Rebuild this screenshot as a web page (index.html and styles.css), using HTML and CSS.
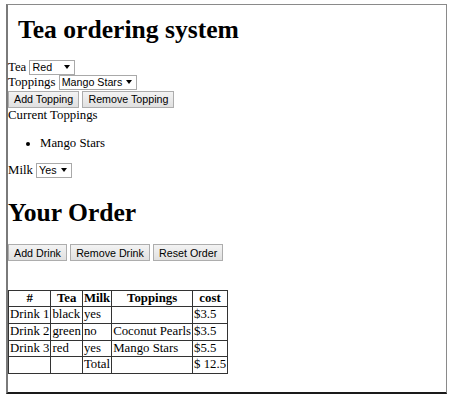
FILE: index.html
```html
<!DOCTYPE html>
<html>
<head>
<meta charset="utf-8">
<title>Tea ordering system</title>
<link rel="stylesheet" href="styles.css">
</head>
<body>
<div class="frame">
  <h1 class="title">Tea ordering system</h1>
  <div class="row">Tea <span class="sel sel-tea"><select><option>Red</option><option>Black</option><option>Green</option></select></span></div>
  <div class="row">Toppings <span class="sel sel-top"><select><option>Mango Stars</option><option>Coconut Pearls</option></select></span></div>
  <div class="row"><button class="btn">Add Topping</button> <button class="btn">Remove Topping</button></div>
  <div class="row">Current Toppings</div>
  <ul class="toppings"><li>Mango Stars</li></ul>
  <div class="row">Milk <span class="sel sel-milk"><select><option>Yes</option><option>No</option></select></span></div>
  <h1 class="order-title">Your Order</h1>
  <div class="actions"><button class="btn">Add Drink</button> <button class="btn">Remove Drink</button> <button class="btn">Reset Order</button></div>
  <table class="order">
    <thead>
      <tr><th>#</th><th>Tea</th><th>Milk</th><th>Toppings</th><th>cost</th></tr>
    </thead>
    <tbody>
      <tr><td>Drink 1</td><td>black</td><td>yes</td><td></td><td>$3.5</td></tr>
      <tr><td>Drink 2</td><td>green</td><td>no</td><td>Coconut Pearls</td><td>$3.5</td></tr>
      <tr><td>Drink 3</td><td>red</td><td>yes</td><td>Mango Stars</td><td>$5.5</td></tr>
      <tr><td></td><td></td><td>Total</td><td></td><td>$ 12.5</td></tr>
    </tbody>
  </table>
</div>
</body>
</html>
```
FILE: styles.css
```css
html, body {
  background: #fff;
}
body {
  margin: 4px 6px 6px 6px;
  font-family: "Liberation Serif", "Times New Roman", serif;
  font-size: 12.8px;
  color: #000;
}
.frame {
  box-sizing: border-box;
  height: 390px;
  border-left: 2px solid #7a7a7a;
  border-top: 1px solid #8a8a8a;
  border-right: 1px solid #8a8a8a;
  border-bottom: 2px solid #1a1a1a;
}
.title {
  font-size: 25.6px;
  font-weight: bold;
  margin: 10px 0 15px 10px;
}
.order-title {
  font-size: 25.6px;
  font-weight: bold;
  margin: 19px 0 16px 0;
}
.row {
  line-height: 15.3px;
}
.sel {
  position: relative;
  display: inline-block;
  vertical-align: baseline;
}
.sel select {
  -webkit-appearance: none;
  appearance: none;
  box-sizing: border-box;
  height: 15px;
  margin: 0;
  padding: 0 0 0 2px;
  border: 1px solid #a9a9a9;
  border-radius: 0;
  background: #fff;
  font-family: "Liberation Sans", Arial, sans-serif;
  font-size: 10.7px;
  line-height: 13px;
  color: #000;
}
.sel::after {
  content: "";
  position: absolute;
  right: 5px;
  top: 5px;
  width: 0;
  height: 0;
  border-left: 3px solid transparent;
  border-right: 3px solid transparent;
  border-top: 4px solid #000;
  pointer-events: none;
}
.sel-tea select { width: 46px; }
.sel-top select { width: 78px; }
.sel-milk select { width: 36px; }
.btn {
  box-sizing: border-box;
  height: 17px;
  margin: 0;
  padding: 0 5px;
  border: 1px solid #adadad;
  border-radius: 0;
  background: linear-gradient(#f3f3f3, #e0e0e0);
  font-family: "Liberation Sans", Arial, sans-serif;
  font-size: 10.7px;
  color: #000;
  vertical-align: baseline;
}
.toppings {
  margin: 12.8px 0;
  padding-left: 32px;
  line-height: 15px;
}
.actions {
  margin: 0 0 28px 0;
  line-height: 18px;
}
.order {
  border-collapse: collapse;
  border: 1.5px solid #000;
  font-size: 12.8px;
}
.order th, .order td {
  border: 1px solid #333;
  padding: 0 1px;
  height: 15.6px;
  line-height: 15.6px;
  text-align: left;
  white-space: nowrap;
}
.order th {
  text-align: center;
  font-weight: bold;
}
```
